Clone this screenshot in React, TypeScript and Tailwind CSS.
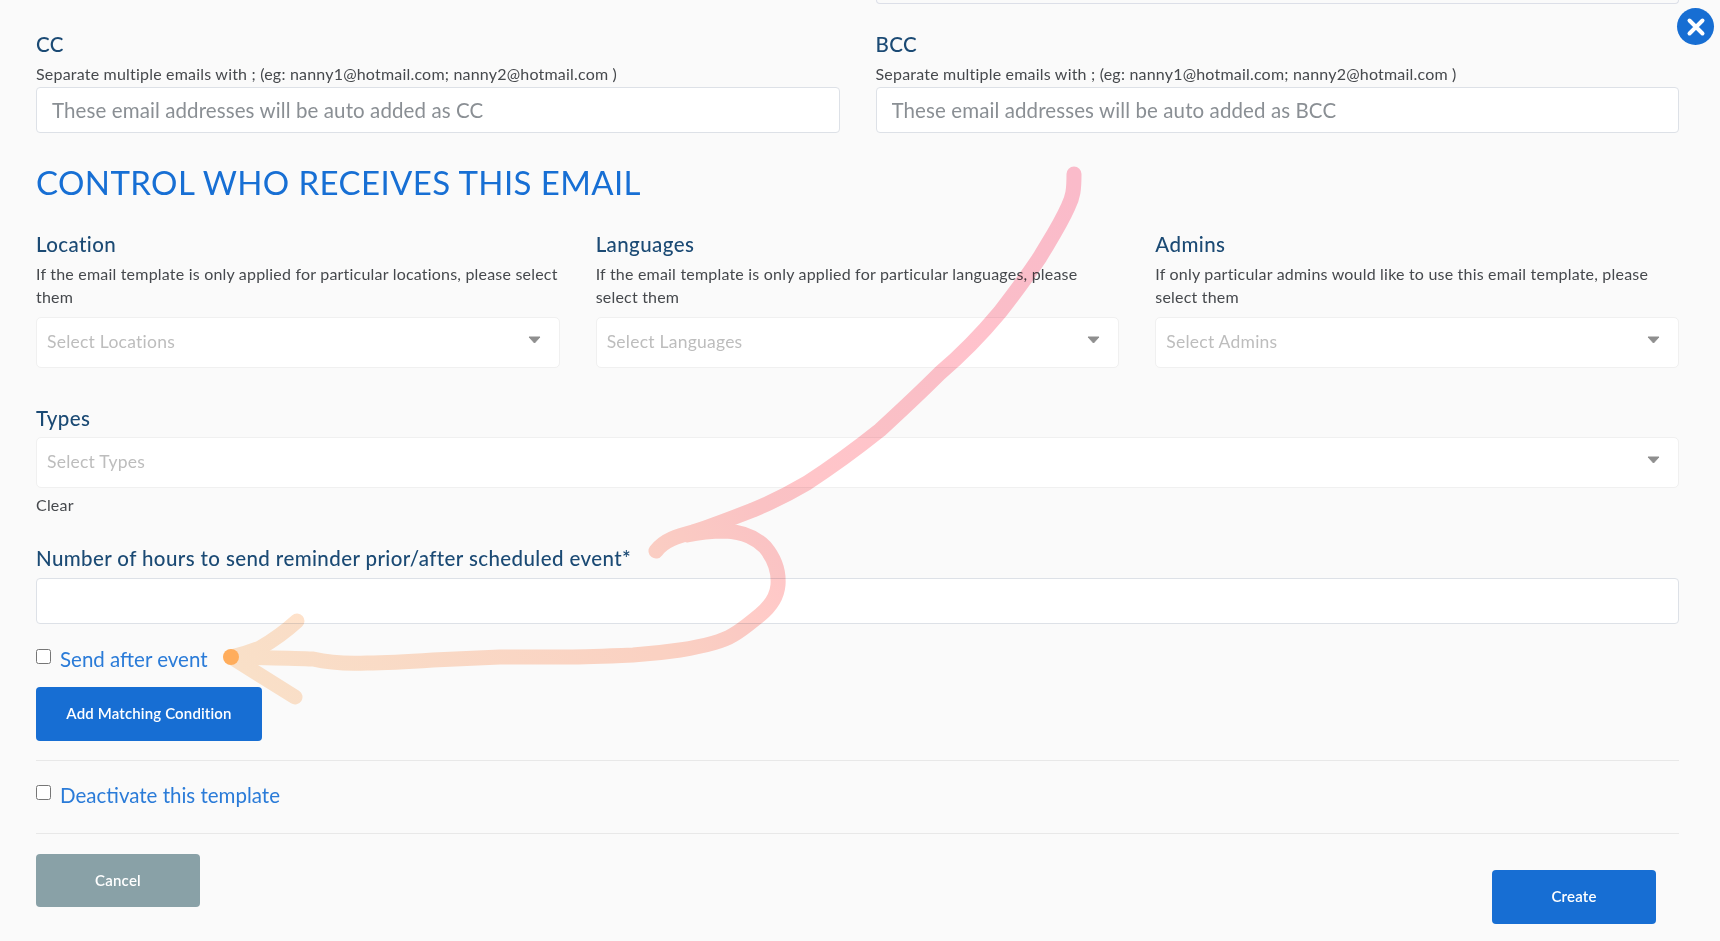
import React from "react";

const font = "font-['Lato','Noto_Sans',sans-serif]";

function Label({ children, className = "" }: { children: React.ReactNode; className?: string }) {
  return <div className={`h-6 leading-[22px] text-[20.5px] font-medium tracking-[0.4px] text-[#1b4a74] ${className}`}>{children}</div>;
}

function Help({ children }: { children: React.ReactNode }) {
  return <div className="mt-[5px] text-[16px] leading-[23px] tracking-[0.2px] text-[#46494d]">{children}</div>;
}

function TextInput({ placeholder }: { placeholder?: string }) {
  return (
    <input
      placeholder={placeholder}
      className="block w-full h-[46px] bg-white border border-[#dde1e7] rounded-[4px] px-[15px] text-[20.5px] tracking-[0.1px] outline-none placeholder:text-[#8a8f94]"
    />
  );
}

function Select({ placeholder }: { placeholder: string }) {
  return (
    <div className="flex items-center justify-between h-[51px] bg-white border border-[#f0f0f0] rounded-[5px] pl-[10px] pr-[18px]">
      <span className="text-[17.5px] leading-[22px] mb-[1px] tracking-[0.24px] text-[#bdbdbd]">{placeholder}</span>
      <svg width="13" height="8" viewBox="0 0 13 8" className="mb-[6px]">
        <path d="M1 1h11L6.5 7z" fill="#8f8f8f" stroke="#8f8f8f" strokeWidth="1" strokeLinejoin="round" />
      </svg>
    </div>
  );
}

function Check({ label }: { label: string }) {
  return (
    <label className="flex items-start h-6">
      <input type="checkbox" className="w-[15px] h-[15px] mt-[1px] m-0" />
      <span className="ml-[9px] text-[20.5px] leading-[22px] text-[#2a7bd8]">{label}</span>
    </label>
  );
}

export default function App() {
  return (
    <div className={`${font} relative h-[941px] overflow-hidden bg-[#fafafa] pl-9 pr-[41px]`}>
      <div className="grid grid-cols-2 gap-x-9">
        <div />
        <div className="h-1 border-x border-b border-[#dcdfe8] rounded-b-[4px]" />
      </div>

      <div className="mt-[29px] grid grid-cols-2 gap-x-9">
        <div>
          <Label>CC</Label>
          <div className="mt-[6px] h-6 leading-[22px] text-[16px] tracking-[0.2px] text-[#46494d]">
            Separate multiple emails with ; (eg: nanny1@hotmail.com; nanny2@hotmail.com )
          </div>
          <TextInput placeholder="These email addresses will be auto added as CC" />
        </div>
        <div>
          <Label>BCC</Label>
          <div className="mt-[6px] h-6 leading-[22px] text-[16px] tracking-[0.2px] text-[#46494d]">
            Separate multiple emails with ; (eg: nanny1@hotmail.com; nanny2@hotmail.com )
          </div>
          <TextInput placeholder="These email addresses will be auto added as BCC" />
        </div>
      </div>

      <h2 className="mt-[29px] h-10 leading-10 text-[33px] font-normal tracking-[0.4px] text-[#176fd4]">
        CONTROL WHO RECEIVES THIS EMAIL
      </h2>

      <div className="mt-[31px] grid grid-cols-3 gap-x-9">
        <div>
          <Label>Location</Label>
          <Help>If the email template is only applied for particular locations, please select them</Help>
          <div className="mt-[9px]">
            <Select placeholder="Select Locations" />
          </div>
        </div>
        <div>
          <Label>Languages</Label>
          <Help>If the email template is only applied for particular languages, please select them</Help>
          <div className="mt-[9px]">
            <Select placeholder="Select Languages" />
          </div>
        </div>
        <div>
          <Label>Admins</Label>
          <Help>If only particular admins would like to use this email template, please select them</Help>
          <div className="mt-[9px]">
            <Select placeholder="Select Admins" />
          </div>
        </div>
      </div>

      <Label className="mt-[39px]">Types</Label>
      <div className="mt-[6px]">
        <Select placeholder="Select Types" />
      </div>
      <div className="mt-[6px] h-6 leading-[22px] text-[16px] tracking-[0.2px] text-[#46494d]">Clear</div>

      <Label className="mt-[29px]">Number of hours to send reminder prior/after scheduled event*</Label>
      <div className="mt-[7px]">
        <TextInput />
      </div>

      <div className="mt-6">
        <Check label="Send after event" />
      </div>

      <button className="mt-[15px] block w-[226px] h-[54px] pb-[2px] rounded-[4px] bg-[#176ed3] text-[15px] font-semibold tracking-[0.15px] text-white">
        Add Matching Condition
      </button>

      <div className="mt-[19px] h-px bg-[#e8e8e8]" />
      <div className="mt-[23px]">
        <Check label="Deactivate this template" />
      </div>
      <div className="mt-[25px] h-px bg-[#e8e8e8]" />

      <div className="mt-5 flex items-start justify-between">
        <button className="w-[164px] h-[53px] rounded-[4px] bg-[#89a1a7] text-[15px] font-semibold tracking-[0.2px] text-white">
          Cancel
        </button>
        <button className="mt-4 mr-[23px] w-[164px] h-[54px] pb-[1px] rounded-[4px] bg-[#176ed3] text-[15px] font-semibold tracking-[0.2px] text-white">
          Create
        </button>
      </div>

      <button className="absolute top-2 right-[6px] flex h-[37px] w-[37px] items-center justify-center rounded-full bg-[#176ed3]">
        <svg width="20" height="20" viewBox="0 0 20 20">
          <path d="M3.5 3.5 16.5 16.5M16.5 3.5 3.5 16.5" stroke="#fff" strokeWidth="4" strokeLinecap="round" />
        </svg>
      </button>

      <svg className="pointer-events-none absolute left-0 top-0 mix-blend-multiply" width="1720" height="941" viewBox="0 0 1720 941" fill="none">
        <defs>
          <linearGradient id="stroke" gradientUnits="userSpaceOnUse" x1="1074" y1="174" x2="231" y2="657">
            <stop offset="0" stopColor="#ffbfce" />
            <stop offset="0.45" stopColor="#ffc6c8" />
            <stop offset="0.62" stopColor="#ffd6c6" />
            <stop offset="1" stopColor="#fee5cc" />
          </linearGradient>
        </defs>
        <g stroke="url(#stroke)" strokeWidth="15" strokeLinecap="round" strokeLinejoin="round">
          <path d="M1074 174C1074 190 1073 197 1068 207C1060 225 1050 240 1040 257C1030 272 1017 290 1000 312C985 330 960 356 940 373C925 388 905 407 880 430C860 446 830 468 807 483C790 493 770 503 753 510C735 517 712 526 693 532C678 536 664 540 656 551" />
          <path d="M687 535C700 532 712 531 725 531C745 532 756 538 765 547C775 559 779 572 778 585C777 597 771 606 760 615C750 623 742 630 733 635C722 642 705 646 680 650C660 653 648 654 633 655C610 656 585 657 567 657C540 657 520 657 500 657C478 658 455 659 433 660C405 662 385 663 367 663C345 664 330 663 313 659C295 658 280 658 231 657" />
          <path d="M297 621C285 632 272 641 260 648C250 652 240 655 231 657L295 697" />
        </g>
      </svg>
      <div className="absolute left-[223px] top-[649px] h-4 w-4 rounded-full bg-[#ffad5c]" />
    </div>
  );
}
